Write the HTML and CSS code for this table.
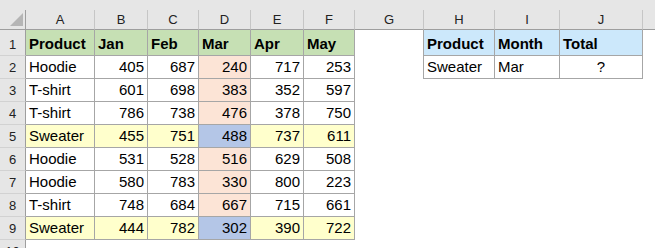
FILE: index.html
```html
<!DOCTYPE html>
<html lang="en">
<head>
    <meta charset="UTF-8">
    <title>Sheet</title>
    <link rel="stylesheet" href="styles.css">
</head>
<body>
    <div class="sheet">
        <div class="band"></div>

        <!-- заголовки столбцов -->
        <div class="ch corner"><span class="tri"></span></div>
        <div class="ch">A</div>
        <div class="ch">B</div>
        <div class="ch">C</div>
        <div class="ch">D</div>
        <div class="ch">E</div>
        <div class="ch">F</div>
        <div class="ch">G</div>
        <div class="ch">H</div>
        <div class="ch">I</div>
        <div class="ch">J</div>
        <div class="ch last"></div>

        <!-- строка 1 -->
        <div class="rh">1</div>
        <div class="c head">Product</div>
        <div class="c head">Jan</div>
        <div class="c head">Feb</div>
        <div class="c head">Mar</div>
        <div class="c head">Apr</div>
        <div class="c head">May</div>
        <div class="e edge"></div>
        <div class="c blue-head">Product</div>
        <div class="c blue-head">Month</div>
        <div class="c blue-head">Total</div>
        <div class="e"></div>

        <!-- строка 2 -->
        <div class="rh">2</div>
        <div class="c">Hoodie</div>
        <div class="c num">405</div>
        <div class="c num">687</div>
        <div class="c num peach">240</div>
        <div class="c num">717</div>
        <div class="c num">253</div>
        <div class="e edge"></div>
        <div class="c">Sweater</div>
        <div class="c">Mar</div>
        <div class="c mid">?</div>
        <div class="e"></div>

        <!-- строка 3 -->
        <div class="rh">3</div>
        <div class="c">T-shirt</div>
        <div class="c num">601</div>
        <div class="c num">698</div>
        <div class="c num peach">383</div>
        <div class="c num">352</div>
        <div class="c num">597</div>
        <div class="e rest"></div>

        <!-- строка 4 -->
        <div class="rh">4</div>
        <div class="c">T-shirt</div>
        <div class="c num">786</div>
        <div class="c num">738</div>
        <div class="c num peach">476</div>
        <div class="c num">378</div>
        <div class="c num">750</div>
        <div class="e rest"></div>

        <!-- строка 5 -->
        <div class="rh">5</div>
        <div class="c yel">Sweater</div>
        <div class="c num yel">455</div>
        <div class="c num yel">751</div>
        <div class="c num blue">488</div>
        <div class="c num yel">737</div>
        <div class="c num yel">611</div>
        <div class="e rest"></div>

        <!-- строка 6 -->
        <div class="rh">6</div>
        <div class="c">Hoodie</div>
        <div class="c num">531</div>
        <div class="c num">528</div>
        <div class="c num peach">516</div>
        <div class="c num">629</div>
        <div class="c num">508</div>
        <div class="e rest"></div>

        <!-- строка 7 -->
        <div class="rh">7</div>
        <div class="c">Hoodie</div>
        <div class="c num">580</div>
        <div class="c num">783</div>
        <div class="c num peach">330</div>
        <div class="c num">800</div>
        <div class="c num">223</div>
        <div class="e rest"></div>

        <!-- строка 8 -->
        <div class="rh">8</div>
        <div class="c">T-shirt</div>
        <div class="c num">748</div>
        <div class="c num">684</div>
        <div class="c num peach">667</div>
        <div class="c num">715</div>
        <div class="c num">661</div>
        <div class="e rest"></div>

        <!-- строка 9 -->
        <div class="rh">9</div>
        <div class="c yel">Sweater</div>
        <div class="c num yel">444</div>
        <div class="c num yel">782</div>
        <div class="c num blue">302</div>
        <div class="c num yel">390</div>
        <div class="c num yel">722</div>
        <div class="e rest"></div>

        <!-- строка 10 -->
        <div class="rh cut">10</div>
        <div class="e rest-all"></div>
    </div>
</body>
</html>
```

FILE: styles.css
```css
body {
    margin: 0;
    background: #fff;
    font-family: "Liberation Sans", Arial, sans-serif;
}

.sheet,
.sheet * {
    box-sizing: border-box;
}

.sheet {
    display: grid;
    grid-template-columns: 26px 69px 53px 51px 52px 53px 51px 69px 71px 65px 83px 1fr;
    grid-template-rows: 10px 20px 26px repeat(8, 23px) 23px;
    width: 655px;
    height: 248px;
    overflow: hidden;
}

.band {
    grid-column: 1 / -1;
    background: #e6e6e6;
}

/* заголовки */
.ch {
    display: flex;
    align-items: center;
    justify-content: center;
    background: #e6e6e6;
    border-right: 1px solid #c6c6c6;
    border-bottom: 1px solid #9e9e9e;
    font-size: 13px;
    color: #222;
}

.ch.last {
    border-right: none;
}

.corner {
    position: relative;
    border-right-color: #9e9e9e;
}

.tri {
    position: absolute;
    right: 2px;
    bottom: 3px;
    width: 0;
    height: 0;
    border-left: 13px solid transparent;
    border-bottom: 13px solid #b5b5b5;
}

.rh {
    display: flex;
    align-items: flex-end;
    justify-content: center;
    padding-bottom: 3px;
    background: #e6e6e6;
    border-right: 1px solid #9e9e9e;
    border-bottom: 1px solid #d2d2d2;
    font-size: 13px;
    color: #222;
}

.rh.cut {
    align-items: flex-start;
    padding: 4px 0 0;
}

/* ячейки */
.c {
    display: flex;
    align-items: flex-end;
    padding: 0 3px 3px;
    border-right: 1px solid #a6a6a6;
    border-bottom: 1px solid #a6a6a6;
    font-size: 15px;
    line-height: 17px;
    color: #000;
    white-space: nowrap;
}

.num {
    justify-content: flex-end;
}

.mid {
    justify-content: center;
}

.head {
    background: #c6e0b4;
    font-weight: bold;
}

.blue-head {
    background: #cce8fb;
    font-weight: bold;
}

.peach {
    background: #fce4d6;
}

.yel {
    background: #ffffcc;
}

.blue {
    background: #b4c6e7;
}

.e.edge {
    border-right: 1px solid #a6a6a6;
}

.rest {
    grid-column: 8 / -1;
}

.rest-all {
    grid-column: 2 / -1;
}
```
